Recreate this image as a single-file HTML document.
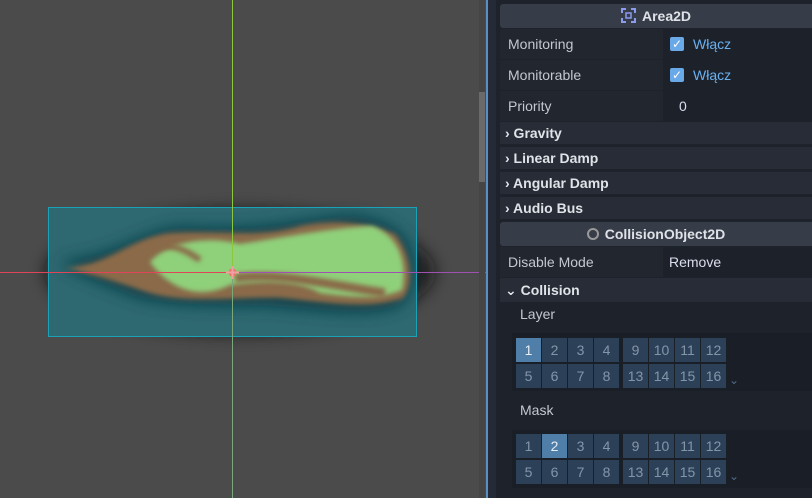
<!DOCTYPE html>
<html><head><meta charset="utf-8"><style>
*{margin:0;padding:0;box-sizing:border-box}
body{width:812px;height:498px;overflow:hidden;background:#4b4b4b;font-family:"Liberation Sans","DejaVu Sans",sans-serif;position:relative}
.abs{position:absolute}
.panel{left:488px;top:0;width:324px;height:498px;background:#1d222b}
.hdr{position:absolute;left:500px;width:312px;background:#363c48;color:#dfe2e7;font-weight:bold;font-size:14px;text-align:center;border-radius:3px 0 0 3px}
.row{position:absolute;left:500px;width:312px;background:#21262f;color:#c4c8cf;font-size:14px}
.row .l{position:absolute;left:8px}
.row .v{position:absolute;left:163px;top:0;bottom:0;right:0;background:#1d222a}
.sec{position:absolute;left:500px;width:312px;background:#272c36;color:#e0e3e8;font-weight:bold;font-size:14px}
.cb{position:absolute;width:14px;height:14px;background:#6aa9e8;border-radius:2px;color:#fff;font-size:12px;font-weight:bold;line-height:14px;text-align:center}
.grid{position:absolute;left:512px;width:300px;height:58px;background:#1a1f27}
.c{position:absolute;width:25px;height:24px;background:#2c4158;color:#8595a8;font-size:14px;text-align:center;line-height:24px}
.c.on{background:#4f7ea8;color:#e8eef5}
</style></head><body>
<svg class="abs" style="left:0;top:0" width="488" height="498">
<defs><filter id="b" x="-20%" y="-50%" width="140%" height="200%"><feGaussianBlur stdDeviation="2.5"/></filter>
<filter id="b2" x="-20%" y="-50%" width="140%" height="200%"><feGaussianBlur stdDeviation="8"/></filter></defs>
<rect x="0" y="0" width="488" height="498" fill="#4b4b4b"/>
<ellipse cx="240" cy="272" rx="195" ry="62" fill="#111" opacity="0.7" filter="url(#b2)"/>
<rect x="48" y="207" width="369" height="130" fill="#2e6870"/>
<path d="M60 262 C120 258 150 225 190 228 C250 232 300 222 330 218 C360 212 390 222 405 240 C415 260 415 290 400 305 C360 320 300 305 250 305 C200 305 150 305 120 290 C95 280 70 270 60 262Z" fill="#0b3c47" filter="url(#b2)"/>
<path d="M65 268 C110 265 130 238 170 233 C220 230 260 238 300 226 C340 218 370 224 395 234 C412 255 414 285 403 298 C370 310 330 303 280 298 C230 297 180 305 140 290 C110 280 85 272 65 268Z" fill="#8a6a48" filter="url(#b)"/>
<path d="M150 262 C170 240 210 236 240 244 C280 238 330 228 372 226 C398 235 408 262 402 290 C380 300 350 297 320 293 C300 280 260 280 230 285 C200 300 170 290 150 262Z" fill="#8fd07a" filter="url(#b)"/>
<path d="M235 278 C280 272 330 285 385 293" stroke="#8a6a48" stroke-width="9" fill="none" filter="url(#b)"/>
<path d="M140 250 C170 240 185 250 200 260" stroke="#8a6a48" stroke-width="6" fill="none" filter="url(#b)"/>
<rect x="48.5" y="207.5" width="368" height="129" fill="none" stroke="#1aa3b8"/>
<line x1="0" y1="272.5" x2="232" y2="272.5" stroke="#e0445a"/>
<line x1="232" y1="272.5" x2="488" y2="272.5" stroke="#a050b0"/>
<line x1="232.5" y1="0" x2="232.5" y2="272" stroke="#8cc83c"/>
<line x1="232.5" y1="272" x2="232.5" y2="498" stroke="#7aa878"/>
<circle cx="232.5" cy="272.5" r="4" fill="#f07070"/>
<path d="M226 272.5h13M232.5 266v13" stroke="#f0a0a0" stroke-width="2"/>
<rect x="479" y="0" width="6" height="498" fill="#454545"/>
<rect x="479" y="92" width="6" height="90" fill="#6a6a6a"/>
<rect x="486" y="0" width="2" height="498" fill="#5a8ec0"/>
</svg>
<div class="abs panel"></div>
<div class="abs" style="left:488px;top:0;width:8px;height:498px;background:#252b36"></div>
<div class="hdr" style="top:4px;height:24px;line-height:24px"><svg width="15" height="15" viewBox="0 0 15 15" style="vertical-align:-2px;margin-right:6px"><path d="M1 5V1h4M10 1h4v4M14 10v4h-4M5 14H1v-4" stroke="#8b9cf0" stroke-width="2" fill="none"/><rect x="5" y="5" width="5" height="5" fill="none" stroke="#8b9cf0" stroke-width="1.5"/></svg>Area2D</div>
<div class="row" style="top:29px;height:30px;line-height:30px"><span class="l">Monitoring</span><div class="v"><span class="cb" style="left:7px;top:8px">✓</span><span style="position:absolute;left:30px;color:#6ab0f0">Włącz</span></div></div>
<div class="row" style="top:60px;height:30px;line-height:30px"><span class="l">Monitorable</span><div class="v"><span class="cb" style="left:7px;top:8px">✓</span><span style="position:absolute;left:30px;color:#6ab0f0">Włącz</span></div></div>
<div class="row" style="top:91px;height:30px;line-height:30px"><span class="l">Priority</span><div class="v"><span style="position:absolute;left:16px;color:#dde">0</span></div></div>
<div class="sec" style="top:122px;height:22px;line-height:22px;padding-left:5px">› Gravity</div>
<div class="sec" style="top:147px;height:22px;line-height:22px;padding-left:5px">› Linear Damp</div>
<div class="sec" style="top:172px;height:22px;line-height:22px;padding-left:5px">› Angular Damp</div>
<div class="sec" style="top:197px;height:22px;line-height:22px;padding-left:5px">› Audio Bus</div>
<div class="hdr" style="top:222px;height:24px;line-height:24px"><span style="display:inline-block;width:12px;height:12px;border:2px solid #999;border-radius:50%;vertical-align:-1px;margin-right:6px"></span>CollisionObject2D</div>
<div class="row" style="top:247px;height:30px;line-height:30px"><span class="l">Disable Mode</span><div class="v"><span style="position:absolute;left:6px;color:#dde">Remove</span></div></div>
<div class="sec" style="top:278px;height:24px;line-height:24px;padding-left:5px">⌄ Collision</div>
<div class="row" style="top:303px;height:30px;line-height:22px;background:#1d222b"><span class="l" style="left:20px">Layer</span></div>
<div class="grid" style="top:333px"></div>
<div class="row" style="top:398px;height:30px;line-height:24px;background:#1d222b"><span class="l" style="left:20px">Mask</span></div>
<div class="grid" style="top:430px"></div>
<div id="g"></div>
<script>
function grid(top,on){var xs=[516,542,568,594,623,649,675,701],h='';
var labels=[[1,2,3,4,9,10,11,12],[5,6,7,8,13,14,15,16]];
for(var r=0;r<2;r++)for(var i=0;i<8;i++){var n=labels[r][i];
h+='<div class="c'+(n==on?' on':'')+'" style="left:'+xs[i]+'px;top:'+(top+r*26)+'px">'+n+'</div>';}
h+='<div class="abs" style="left:729px;top:'+(top+35)+'px;color:#4f6b8a;font-size:12px">⌄</div>';
return h;}
document.getElementById('g').innerHTML=grid(338,1)+grid(434,2);
</script>
</body></html>
